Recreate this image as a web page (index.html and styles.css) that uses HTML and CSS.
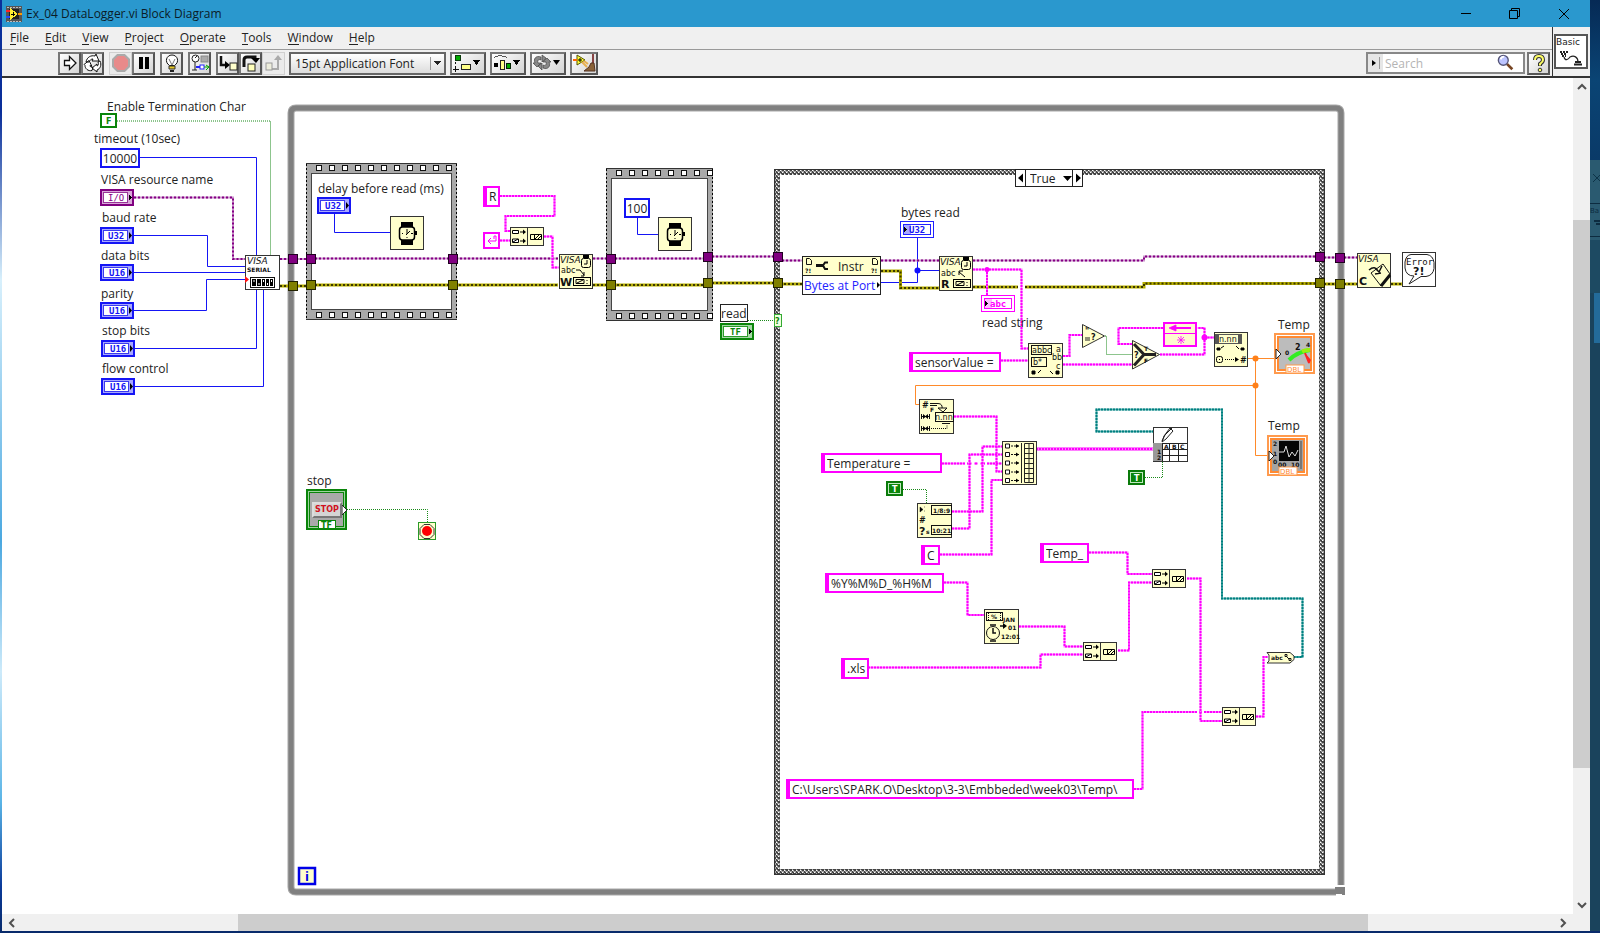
FILE: index.html
```html
<!DOCTYPE html>
<html lang="en">
<head>
<meta charset="utf-8">
<title>Ex_04 DataLogger.vi Block Diagram</title>
<link rel="stylesheet" href="styles.css">
</head>
<body>
<div class="desktop">
<div class="window">
  <header class="titlebar">
    <svg class="app-icon" width="16" height="16" viewBox="0 0 16 16" shape-rendering="crispEdges"><rect width="16" height="16" fill="#555"/><path d="M1 1h14M1 15h14" stroke="#bbb" stroke-dasharray="2 1"/><rect x="3" y="3" width="10" height="10" fill="#222"/><path d="M4 2l8 6-8 6z" fill="#fe3"/><path d="M0 5h4" stroke="#f22" stroke-width="2"/><path d="M0 11h4" stroke="#24f" stroke-width="2"/><path d="M12 8h4" stroke="#f90" stroke-width="2"/><path d="M5 8h4M7 6v4" stroke="#000"/></svg>
    <h1 class="title">Ex_04 DataLogger.vi Block Diagram</h1>
    <div class="caption-buttons">
      <button class="caption" aria-label="Minimize"><svg width="12" height="12" viewBox="0 0 12 12"><path d="M1 5.500h10" stroke="#000"/></svg></button>
      <button class="caption" aria-label="Restore"><svg width="12" height="12" viewBox="0 0 12 12" fill="none" stroke="#000"><path d="M.5 2.500h8v8h-8zM2.500 2.500v-2h8v8h-2"/></svg></button>
      <button class="caption" aria-label="Close"><svg width="12" height="12" viewBox="0 0 12 12"><path d="M1 1l10 10M11 1L1 11" stroke="#000" fill="none"/></svg></button>
    </div>
  </header>

  <div class="header">
    <div class="bars">
      <nav class="menu">
        <a href="#"><u>F</u>ile</a><a href="#"><u>E</u>dit</a><a href="#"><u>V</u>iew</a><a href="#"><u>P</u>roject</a><a href="#"><u>O</u>perate</a><a href="#"><u>T</u>ools</a><a href="#"><u>W</u>indow</a><a href="#"><u>H</u>elp</a>
      </nav>
      <div class="toolbar">
        <div class="run-tools">
        <div class="group">
          <button class="tool" aria-label="Run"><svg width="20" height="20" viewBox="0 0 20 20"><path d="M4.500 7.500h5v-4l6.500 6.500-6.500 6.500v-4h-5z" fill="#fff" stroke="#111" stroke-width="1.300"/></svg></button>
          <button class="tool" aria-label="Run continuously"><svg width="20" height="20" viewBox="0 0 20 20" fill="#fff" stroke="#111"><path d="M3 9c1-5 5-7 9-6l1-2 3 7h-7l1-2c-2 0-3 1-4 3zM17 8c2 4 0 8-3 9v2l-5-4 5-4v2c1 0 2-2 1-4zM9 17.500c-4 1-7-2-7-5l-1-1 5-4 3 6-2-1c0 1 1 2 3 2z"/></svg></button>
        </div>
        <div class="group">
          <button class="tool off" aria-label="Abort execution"><svg width="20" height="20" viewBox="0 0 20 20"><path d="M6.500 2h7l4.500 4.500v7L13.500 18h-7L2 13.500v-7z" fill="#e88a8a" stroke="#aaa" stroke-width="2"/></svg></button>
          <button class="tool" aria-label="Pause"><svg width="20" height="20" viewBox="0 0 20 20"><path d="M5 4h4v12H5zM11 4h4v12h-4z"/></svg></button>
        </div>
        <div class="group">
          <button class="tool" aria-label="Highlight execution"><svg width="20" height="20" viewBox="0 0 20 20"><path d="M7.500 12.500C2 9 4.500 2 10 2s8 7 2.500 10.500z" fill="#fff" stroke="#111"/><path d="M7 6l3 6 3-6" fill="none" stroke="#777"/><path d="M7 13h6v3H7z" fill="#e8c820" stroke="#333"/><path d="M8 17h4v2H8z" fill="#222"/></svg></button>
        </div>
        <div class="group">
          <button class="tool" aria-label="Retain wire values"><svg width="20" height="20" viewBox="0 0 20 20"><circle cx="5.500" cy="5.500" r="3.500" fill="#fff" stroke="#222"/><path d="M5 5l2-2M5 9v8M2 17h5" stroke="#222" fill="none"/><rect x="11" y="3" width="7" height="6" fill="#aaa" stroke="#888"/><path d="M6 14h4" stroke="#22f" stroke-width="2"/><rect x="10" y="12" width="4" height="4" fill="#fff" stroke="#22f"/><path d="M14 14h5M16 12l3 2-3 3" stroke="#0a0" fill="none"/></svg></button>
        </div>
        <div class="group">
          <button class="tool" aria-label="Step into"><svg width="20" height="20" viewBox="0 0 20 20"><path d="M3 3v9h5" fill="none" stroke="#111" stroke-width="2.500"/><path d="M7 8l5 4-5 4z"/><rect x="12" y="10" width="7" height="7" fill="#ffc" stroke="#222"/></svg></button>
          <button class="tool" aria-label="Step over"><svg width="20" height="20" viewBox="0 0 20 20"><path d="M3 14V7q0-3 3-3h8v3" fill="none" stroke="#111" stroke-width="3"/><path d="M10 5h9l-4 5z"/><rect x="7" y="11" width="7" height="7" fill="#ffb" stroke="#222"/></svg></button>
          <button class="tool off" aria-label="Step out"><svg width="20" height="20" viewBox="0 0 20 20"><path d="M8 16h6V6" fill="none" stroke="#aaa" stroke-width="2"/><path d="M10 7l4-5 4 5z" fill="#aaa"/><rect x="2" y="10" width="6" height="7" fill="#eed" stroke="#999"/></svg></button>
        </div>
        </div>
        <select class="font-select" aria-label="Text settings"><option>15pt Application Font</option></select>
        <button class="tool wide" aria-label="Align objects"><svg width="32" height="20" viewBox="0 0 32 20" shape-rendering="crispEdges"><path d="M3.500 9v2M3.500 13v2M1 16.500h6M9 14.500h2M3.500 15v4" stroke="#111"/><rect x="3" y="2" width="6" height="6" fill="#0b3a0b"/><rect x="4" y="3" width="4" height="4" fill="#0a0"/><rect x="9.500" y="11.500" width="9" height="5" fill="#ff8" stroke="#222"/><path d="M21 7h7l-3.500 5z"/></svg></button>
        <button class="tool wide" aria-label="Distribute objects"><svg width="32" height="20" viewBox="0 0 32 20" shape-rendering="crispEdges"><path d="M2 5q1-2 4-2l2-1 2 1q4 0 5 2" stroke="#555" fill="none"/><rect x="2" y="10" width="4" height="4"/><rect x="8.500" y="7.500" width="4" height="9" fill="#ff8" stroke="#222"/><rect x="14.500" y="10.500" width="4" height="5" fill="#0a0" stroke="#020"/><path d="M21 7h7l-3.500 5z"/></svg></button>
        <button class="tool wide" aria-label="Reorder"><svg width="32" height="20" viewBox="0 0 32 20"><path d="M9 4C4 2 1 6 3 10H1l4 4 4-4H6C5 7 7 6 9 7zM11 15c5 2 8-2 6-6h2l-4-4-4 4h3c1 3-1 4-3 3zM10 2l4 3-4 4zM10 10l-4 3 4 4z" fill="#888" stroke="#444" stroke-width=".7"/><path d="M21 7h7l-3.500 5z"/></svg></button>
        <button class="tool clean" aria-label="Clean up diagram"><svg width="24" height="20" viewBox="0 0 24 20"><path d="M5 2l8 5-8 5z" fill="#ff3" stroke="#550"/><path d="M1 7h4" stroke="#f60" stroke-width="2"/><path d="M6 7h4M8 5v4" stroke="#000"/><path d="M10 9l5 5M12 8l4 3" stroke="#e8b050" stroke-width="2"/><path d="M21 1v9" stroke="#844" stroke-width="2"/><path d="M19 10h3l1 8H12l5-4z" fill="#8a6238" stroke="#532"/></svg></button>
        <div class="search">
          <button class="search-scope" aria-label="Search scope"><svg width="14" height="18" viewBox="0 0 14 18"><path d="M3 6l4 3-4 3z"/><path d="M10.500 3v12" stroke="#999"/></svg></button>
          <input type="search" placeholder="Search" aria-label="Search">
          <button class="search-go" aria-label="Find"><svg width="20" height="20" viewBox="0 0 20 20"><path d="M11 11l6 6" stroke="#742" stroke-width="3"/><circle cx="7" cy="7" r="5.500" fill="#bcc4ff" stroke="#557" stroke-width="1.500"/><path d="M4 6q1-3 4-3" stroke="#fff" stroke-width="2" fill="none"/></svg></button>
        </div>
        <button class="tool help" aria-label="Context help"><svg width="20" height="20" viewBox="0 0 20 20"><path d="M6 7q0-4 4-4t4 4q0 2-3 4v2" fill="none" stroke="#333" stroke-width="4"/><path d="M6 7q0-4 4-4t4 4q0 2-3 4v1.500" fill="none" stroke="#ff6" stroke-width="2"/><circle cx="11" cy="17" r="1.800" fill="#ff6" stroke="#333"/></svg></button>
      </div>
    </div>
    <div class="vi-icon-cell">
      <div class="vi-icon"><span>Basic</span><svg width="30" height="18" viewBox="0 0 30 18"><path d="M4 3h8M5 5h6M6 7h4" stroke="#222" stroke-width="2" stroke-dasharray="2 1"/><path d="M8 8c1 4 4 3 6 0 4-2 8 0 8 5" fill="none" stroke="#222" stroke-width="1.200"/><path d="M19 13h6M18 15.500h8" stroke="#222" stroke-width="2"/></svg></div>
    </div>
  </div>

  <main class="work">
    <div class="canvas">
<svg class="diagram" width="1570" height="836" viewBox="2 78 1570 836">
<defs>
  <pattern id="mesh" width="4" height="4" patternUnits="userSpaceOnUse"><rect width="4" height="4" fill="#a4a4a4"/><path d="M0 0h2v1H0zM1 1h2v1H1zM2 2h2v1H2zM0 3h1v1H0zM3 1h1v1H3z" fill="#444"/><path d="M0 2h1v1H0zM2 0h1v1H2z" fill="#fff"/></pattern>
  <pattern id="film" width="13" height="10" patternUnits="userSpaceOnUse"><rect width="13" height="10" fill="#a9a9a9"/><rect x="3.500" y="2.500" width="5" height="5" fill="#fff" stroke="#111"/></pattern>
  <symbol id="num" viewBox="0 0 34 17"><rect width="34" height="17" fill="#1515f5"/><rect x="2" y="2" width="30" height="13" fill="#a8a8ff"/><rect x="3.500" y="3.500" width="24" height="10" fill="#fff" stroke="#3a3af0"/><path d="M29 5l3 3.500-3 3.500z"/></symbol>
  <symbol id="watch" viewBox="0 0 34 34"><rect x=".5" y=".5" width="33" height="33" fill="#ffc" stroke="#333"/><path d="M11 6h12v5H11zM11 24h12v5H11zM25 15h2v4h-2z"/><rect x="9.500" y="11" width="15" height="13" rx="3" fill="#ffc" stroke="#000" stroke-width="1.500"/><path d="M17 13v5M16 19l4-4M12 17.500h1M21 17.500h2M17 21v1" stroke="#000" fill="none"/></symbol>
  <symbol id="concat" viewBox="0 0 34 19"><rect x=".5" y=".5" width="33" height="18" fill="#ffc" stroke="#333"/><path d="M17.500 1v17" stroke="#333"/><path d="M2.500 3.500h6v3h-6z" fill="#fff" stroke="#000"/><path d="M2.500 12h6v3.500h-6z" fill="#fff" stroke="#000"/><path d="M3 15l5-3M10 5h4M10 14h4" stroke="#000"/><path d="M13 2.500l3 2.500-3 2.500zM13 11.500l3 2.500-3 2.500z"/><path d="M20.500 7.500h11v5h-11zM24.500 7.500v5M25 12l4-4M28 12l3-3" stroke="#000" fill="none"/></symbol>
  <symbol id="tp" viewBox="0 0 10 10"><rect x=".5" y=".5" width="9" height="9" fill="#800080" stroke="#200020"/></symbol>
  <symbol id="ty" viewBox="0 0 10 10"><rect x=".5" y=".5" width="9" height="9" fill="#808000" stroke="#222200"/></symbol>

  <g id="pink-wires">
    <path d="M500 196h54.500v20H505.500v15H510M500 240.500h10M544 236.500h8.500V267.500h6"/>
    <path d="M973 269.500h13M1063 356h6.500v-21H1082M1001 360.500h27M1063 364.500h69M1163 328h-44.500v16h13.500M1160 354.500h44.500V328h-7M1204.500 337.500h10"/>
    <path d="M954 416.500h42.500v55h7M952 511.500h30.500v-65h20.500M952 528.500h17.500v-74h34M942 463.500h61M940 554.500h51.500v-74.500h12"/>
    <path d="M944 582.500h23.500v32.500h17M1089 552.500h38.500v21.500h25M1118 650.500h11v-68h23M1019 626.500h45.500v20h19M868 667.500h172.500v-13h43"/>
    <path d="M1134 789h8.500v-77H1222M1256 716.500h7.500V657h4"/>
  </g>
  <g id="pink-over"><path d="M986 269.500h35.500V348.500h7M987 269v26M1187 578.500h13.500V721h22"/></g>
  <g id="purple-wires"><path d="M134 197.500h99v61.500h13M280 259h12M292 259h19M311 258.500h141M452 258.500h106M593 258.500h18M611 258.500h97M708 256.500h70M778 260.500h24M881 260.500h58M973 260.500h171v-4h176M1320 257.500h37"/></g>
  <g id="yellow-wires"><path d="M280 286h31M311 285h247M593 285h115M708 283h70M780 284h22M881 271h19.500v17h38.500M973 287h45M1025 287h119v-3.500h176M1320 284h37M1391 284h11"/></g>
  <g id="teal-wires"><path d="M1154 431.500h-57.500v-22h125.500v189h80.500V657H1293"/></g>
</defs>

<!-- while loop -->
<path class="loop-edge" d="M1341 885V113q0-5-5-5H296q-5 0-5 5V887q0 5 5 5H1336"/>
<path class="loop" d="M1341 885V113q0-5-5-5H296q-5 0-5 5V887q0 5 5 5H1336"/>
<path d="M1335 887h10v8h-3v-1h-7z" fill="#808080"/>

<!-- case structure -->
<path d="M774 169h551v705H774zM780 175v694h539V175z" fill="url(#mesh)" fill-rule="evenodd"/>
<rect x="774.500" y="169.500" width="550" height="705" class="ink"/>

<!-- sequence frames -->
<g class="crisp">
  <rect x="306" y="163" width="151" height="157" fill="#a9a9a9"/>
  <rect width="143" height="10" fill="url(#film)" transform="translate(313 163)"/>
  <rect width="143" height="10" fill="url(#film)" transform="translate(313 310)"/>
  <rect x="311.500" y="173.500" width="140" height="136" fill="#fff" stroke="#444"/>
  <path d="M306 163.500h151M306 319.500h151" stroke="#333"/><path d="M306.500 164v156M456.500 164v156" stroke="#000" stroke-dasharray="2 2"/>
  <rect x="606" y="168" width="107" height="153" fill="#a9a9a9"/>
  <rect width="100" height="10" fill="url(#film)" transform="translate(613 168)"/>
  <rect width="100" height="10" fill="url(#film)" transform="translate(613 311)"/>
  <rect x="611.500" y="178.500" width="96" height="132" fill="#fff" stroke="#444"/>
  <path d="M606 168.500h107M606 320.500h107" stroke="#333"/><path d="M606.500 169v152M712.500 169v152" stroke="#000" stroke-dasharray="2 2"/>
</g>

<!-- wires -->
<g class="w-bool"><path d="M117 121h153.500v134M748 320.500h26M1105 336h1.500v18.500h26M903 489.500h23.500v14M1145 477.500h17.500v-16M341 509.500h86.500V522"/></g>
<g class="w-int"><path d="M140 157.500h116.500V255M134 235.500h73.500v31H246M134 272.500h112M134 310.500h72.500v-31H246M135 348.500h121.500V290M135 386.500h128.500V290M334.500 214v18.500H390M637.500 218v16.500h21M917.500 238v44.500H881M917.500 270.500H939"/></g>
<g class="w-dbl"><path d="M1248 358.500h27M1255.500 358v97.500h12M1255.500 385.500H915.500v19h4"/></g>
<use href="#purple-wires" class="w-purple"/><use href="#purple-wires" class="w-purple-t"/>
<use href="#yellow-wires" class="w-err"/><use href="#yellow-wires" class="w-err-t"/>
<use href="#teal-wires" class="w-teal"/><use href="#teal-wires" class="w-teal-t"/>
<use href="#pink-wires" class="w-str"/><use href="#pink-wires" class="w-str-t"/>
<path d="M965 463.500h2M972 463.500h2M978 463.500h2M985 463.500h2M1197 712h2M1202 712h2" stroke="#fff" stroke-width="4"/>
<use href="#pink-over" class="w-str"/><use href="#pink-over" class="w-str-t"/>
<path d="M1037 449h117" stroke="#f0f" stroke-width="3"/><path d="M1038 449h116" stroke="#fff" stroke-dasharray="1 2"/>
<circle cx="917.500" cy="270.500" r="3" fill="#11f"/><circle cx="1255.500" cy="358.500" r="3" fill="#ff8019"/><circle cx="1255.500" cy="385.500" r="3" fill="#ff8019"/>
<circle cx="987" cy="269.500" r="2.500" fill="#f0f"/><circle cx="1204.500" cy="337.500" r="3" fill="#f0f"/>

<!-- tunnels -->
<use href="#tp" x="288" y="254" width="10" height="10"/><use href="#tp" x="306" y="254" width="10" height="10"/><use href="#tp" x="448" y="254" width="10" height="10"/><use href="#tp" x="606" y="254" width="10" height="10"/><use href="#tp" x="703" y="252" width="10" height="10"/><use href="#tp" x="773" y="252" width="10" height="10"/><use href="#tp" x="1315" y="252" width="10" height="10"/><use href="#tp" x="1335" y="253" width="10" height="10"/>
<use href="#ty" x="288" y="281" width="10" height="10"/><use href="#ty" x="306" y="280" width="10" height="10"/><use href="#ty" x="448" y="280" width="10" height="10"/><use href="#ty" x="606" y="280" width="10" height="10"/><use href="#ty" x="703" y="278" width="10" height="10"/><use href="#ty" x="773" y="278" width="10" height="10"/><use href="#ty" x="1315" y="278" width="10" height="10"/><use href="#ty" x="1335" y="279" width="10" height="10"/>
<rect x="774.500" y="314.500" width="7" height="12" fill="#efd" stroke="#3a3"/><text class="px green" x="775" y="324">?</text>

<!-- serial settings -->
<g class="label">
  <text x="107" y="111">Enable Termination Char</text><text x="94" y="143">timeout (10sec)</text><text x="101" y="184">VISA resource name</text><text x="102" y="222">baud rate</text><text x="101" y="260">data bits</text><text x="101" y="298">parity</text><text x="102" y="335">stop bits</text><text x="102" y="373">flow control</text>
  <text x="318" y="193">delay before read (ms)</text><text x="901" y="217">bytes read</text><text x="982" y="327">read string</text><text x="1278" y="329">Temp</text><text x="1268" y="430">Temp</text><text x="307" y="485">stop</text>
</g>
<rect x="101" y="114" width="15" height="13" fill="#fff" stroke="#0a850a" stroke-width="2"/><text class="px green" x="106" y="124">F</text>
<g class="crisp"><rect x="100" y="189" width="34" height="17" fill="#800080"/><rect x="102" y="191" width="30" height="13" fill="#d9a8d9"/><rect x="103.500" y="192.500" width="24" height="10" fill="#fff" stroke="#939"/><path d="M129 194l3 3.500-3 3.500z"/></g><text class="term light purple" x="108" y="201">I/O</text>
<use href="#num" x="100" y="227" width="34" height="17"/><use href="#num" x="100" y="264" width="34" height="17"/><use href="#num" x="100" y="302" width="34" height="17"/><use href="#num" x="101" y="340" width="34" height="17"/><use href="#num" x="101" y="378" width="34" height="17"/><use href="#num" x="317" y="197" width="34" height="17"/>
<g class="term blue"><text x="108" y="239">U32</text><text x="109" y="276">U16</text><text x="109" y="314">U16</text><text x="110" y="352">U16</text><text x="110" y="390">U16</text><text x="325" y="209">U32</text></g>
<g transform="translate(245 255)"><rect x=".5" y=".5" width="34" height="34" fill="#fff" stroke="#333"/><text class="px thin it" x="2" y="9">VISA</text><text class="tiny" x="2" y="17">SERIAL</text><rect x="5.500" y="22.500" width="24" height="10" fill="#fff" stroke="#111"/><path d="M7 24h4v7H7zM12 24h4v7h-4zM17 24h3v7h-3zM21 24h3v7h-3zM25 24h3v7h-3z"/><path d="M9 25v2M14 28v2M18.500 25v2M22.500 28v2M26.500 25v2" stroke="#fff"/><path d="M0 21l4 3.500L0 28z" fill="#f11"/></g>

<use href="#watch" x="390" y="216" width="34" height="34"/><use href="#watch" x="658" y="217" width="34" height="34"/>
<rect x="484" y="233" width="15" height="15" fill="#fff" stroke="#f0f" stroke-width="2"/><path d="M496 236v5h-7M491 238l-3 3 3 3M496 236h-2v3" fill="none" stroke="#f0f"/>
<use href="#concat" x="510" y="227" width="34" height="19"/><use href="#concat" x="1152" y="569" width="34" height="19"/><use href="#concat" x="1083" y="642" width="34" height="19"/><use href="#concat" x="1222" y="707" width="34" height="19"/>

<!-- VISA write and read -->
<g transform="translate(559 254)"><rect x=".5" y=".5" width="33" height="34" fill="#ffc" stroke="#333"/><text class="px thin it" x="1" y="9">VISA</text><text class="px thin" x="2" y="19">abc</text><text class="px big" x="1" y="32">W</text><path d="M24 1h6v3h-6z"/><rect x="22.500" y="4.500" width="9" height="9" rx="2" fill="#ffc" stroke="#000"/><path d="M28 6v4h-3M17 16h4l4 5M25 18v4h-3" fill="none" stroke="#000"/><rect x="14.500" y="23.500" width="17" height="8" fill="#ffc" stroke="#000"/><path d="M17 25.500h8v4h-8zM18 29l6-3M28 26v1M28 29v1" fill="none" stroke="#000"/></g>
<g transform="translate(939 256)"><rect x=".5" y=".5" width="33" height="34" fill="#ffc" stroke="#333"/><text class="px thin it" x="1" y="9">VISA</text><text class="px thin" x="2" y="20">abc</text><text class="px big" x="2" y="32">R</text><path d="M24 1h6v3h-6z"/><rect x="22.500" y="4.500" width="9" height="9" rx="2" fill="#ffc" stroke="#000"/><path d="M28 6v4h-3M26 21l-6-5M20 19v-4h4" fill="none" stroke="#000"/><rect x="14.500" y="23.500" width="17" height="8" fill="#ffc" stroke="#000"/><path d="M17 25.500h8v4h-8zM18 29l6-3M28 26v1M28 29v1" fill="none" stroke="#000"/></g>

<!-- read control -->
<rect x="720.500" y="304.500" width="27" height="17" fill="#fff" stroke="#222"/><text class="lab" x="721" y="318">read</text>
<g class="crisp"><rect x="720" y="323" width="34" height="17" fill="#0a850a"/><rect x="722" y="325" width="30" height="13" fill="#a5d8a5"/><rect x="723.500" y="326.500" width="24" height="10" fill="#fff" stroke="#2a9a2a"/><path d="M749 328l3 3.500-3 3.500z"/></g><text class="term green" x="730" y="335">TF</text>

<!-- property node -->
<rect x="802.500" y="256.500" width="78" height="38" fill="#fff" stroke="#222"/><rect x="802.500" y="256.500" width="78" height="19" fill="#ffc" stroke="#222"/>
<path d="M806.500 258.500h3l2 2v4h-5zM872.500 258.500h3l2 2v4h-5z" fill="#ffc" stroke="#111"/><text class="tiny" x="805" y="273">?!</text><text class="tiny" x="871" y="273">?!</text>
<path d="M816 265.500h8" stroke="#111" stroke-width="3"/><path d="M828 262.500h-3l-2 3 2 3.500h3" fill="none" stroke="#111" stroke-width="2"/>
<text class="lab" x="838" y="271">Instr</text><text class="lab bluet" x="804" y="290">Bytes at Port</text><path d="M877 282l3 3-3 3z"/>
<g class="crisp"><rect x="900.500" y="221.500" width="33" height="16" fill="#fff" stroke="#22f"/><rect x="903.500" y="224.500" width="27" height="10" fill="#fff" stroke="#22f"/><rect x="904" y="225" width="7" height="9" fill="#a8a8ff"/><path d="M904 226l3 3.500-3 3.500z"/></g><text class="term blue" x="909" y="233">U32</text>
<g class="crisp"><rect x="981.500" y="295.500" width="33" height="16" fill="#fff" stroke="#f0f"/><rect x="984.500" y="298.500" width="27" height="10" fill="#fff" stroke="#f0f"/><rect x="985" y="299" width="7" height="9" fill="#fbf"/><path d="M985 300l3 3.500-3 3.500z"/></g><text class="term pink" x="990" y="307">abc</text>

<!-- VISA close, error handler -->
<g transform="translate(1357 253)"><rect x=".5" y=".5" width="33" height="34" fill="#ffc" stroke="#333"/><text class="px thin it" x="1" y="9">VISA</text><text class="px big" x="2" y="32">C</text><path d="M14 20l12-9 7 10-9 12zM24 33l9-10" fill="#ffc" stroke="#111"/><path d="M24 33l9-11" stroke="#111" stroke-width="3"/><path d="M12 17q6-5 9 1M18 15l4 4 3-6M18 21l6-1" fill="none" stroke="#111" stroke-width="1.500"/></g>
<g transform="translate(1402 252)"><rect x=".5" y=".5" width="33" height="34" fill="#fff" stroke="#333"/><path d="M9 2.500h16q6 1 7 8v6q-1 7-8 8h-5L7 32l5-8q-8 0-9-8v-6q1-7 6-7.500z" fill="#fff" stroke="#222"/><text class="px mono" x="4" y="13">Error</text><text class="px big" x="11" y="23">?!</text></g>

<!-- match pattern, empty test, select, feedback, fract string to number -->
<g transform="translate(1028 343)"><rect x=".5" y=".5" width="34" height="34" fill="#ffc" stroke="#333"/><rect x="3.500" y="2.500" width="20" height="9" fill="#ffc" stroke="#111"/><text class="px thin" x="4" y="10">abbc</text><rect x="3.500" y="14.500" width="15" height="9" fill="#ffc" stroke="#111"/><text class="px thin" x="5" y="22">b*</text><text class="px thin" x="28" y="9">a</text><text class="px thin" x="24" y="17">bb</text><text class="px thin" x="28" y="26">c</text><path d="M4 28h3v3H4zM10 30l3-3M22 28l3 3M28 28h3v3h-3z" stroke="#000"/></g>
<path d="M1082.500 324.500l22 11.500-22 11.500z" fill="#ffc" stroke="#333"/><text class="px" x="1085" y="334">"</text><text class="px" x="1091" y="340">?</text><path d="M1085 338h5M1085 340h5" stroke="#222"/>
<path d="M1132.500 340.500l27 14-27 14.500z" fill="#ffc" stroke="#333"/><path d="M1134 344l10 10.500-10 11M1144 354.500h12" fill="none" stroke="#222" stroke-width="3"/><text class="px" x="1134" y="358">?</text><text class="tiny" x="1144" y="351">T</text><text class="tiny" x="1144" y="363">F</text>
<rect x="1164" y="323" width="32" height="23" fill="#fffad0" stroke="#f0f" stroke-width="2"/><path d="M1164 333.500h32" stroke="#f0f"/><path d="M1175 328h16" stroke="#f0f" stroke-width="2"/><path d="M1169 328l7-3v6zM1181 336v8M1177 340h8M1178 337l6 6M1184 337l-6 6" fill="#f0f" stroke="#f0f" stroke-width=".8"/>
<g transform="translate(1214 332)"><rect x=".5" y=".5" width="33" height="34" fill="#ffc" stroke="#333"/><rect x="1" y="2" width="27" height="10" fill="#555"/><rect x="5" y="3" width="19" height="8" fill="#ffc"/><text class="px thin" x="5" y="10">n.nn</text><path d="M3 16h3v2H3zM7 16l3-2M22 14l3 3M27 16h3v2h-3z" stroke="#000"/><rect x="2.500" y="24.500" width="6" height="6" rx="2" fill="none" stroke="#000"/><path d="M5 27.500h1M11 27.500h10" stroke="#000" stroke-dasharray="1 1"/><path d="M21 25l4 2.500-4 2.500z"/><text class="px" x="26" y="31">#</text></g>

<!-- gauge and chart terminals -->
<g transform="translate(1274 333)"><rect x="1" y="1" width="39" height="39" fill="#fff" stroke="#ff9a4d" stroke-width="2"/><rect x="4" y="4" width="33" height="33" fill="#bcbcbc" stroke="#ff8a33" stroke-width="2"/><path d="M15 27q8-8 21-10" stroke="#3e2" stroke-width="4" fill="none"/><path d="M28 18.500q4-2 8-1.500" stroke="#9e1" stroke-width="4" fill="none"/><path d="M31 20l4 11 2-4z" fill="#f22"/><path d="M31 20l4 10" stroke="#f22" stroke-width="2"/><text class="tiny" x="11" y="22">0</text><text class="px" x="21" y="17">2</text><text class="tiny" x="32" y="14">4</text><path d="M2 16l5 5-5 5z" fill="#fff" stroke="#222"/><rect x="12" y="32" width="18" height="8" fill="#fff" stroke="#ff9a4d"/><text class="px thin orange" x="13" y="39">DBL</text></g>
<g transform="translate(1267 435)"><rect x="1" y="1" width="39" height="39" fill="#fff" stroke="#ff9a4d" stroke-width="2"/><rect x="4" y="4" width="33" height="33" fill="#a4a4a4" stroke="#ff8a33" stroke-width="2"/><path d="M34 6v28" stroke="#777" stroke-width="2"/><rect x="12" y="6" width="20" height="20" fill="#050505"/><path d="M12 17h5l2-6 3 11 3-5 3 4 3-6" stroke="#ddd" fill="none"/><text class="tiny" x="6" y="11">2</text><text class="tiny" x="6" y="21">1</text><text class="tiny" x="6" y="29">0</text><text class="tiny" x="11" y="32">00</text><text class="tiny" x="24" y="32">10</text><path d="M2 16l5 5-5 5z" fill="#fff" stroke="#222"/><rect x="12" y="32" width="18" height="8" fill="#fff" stroke="#ff9a4d"/><text class="px thin orange" x="13" y="39">DBL</text></g>

<!-- number to string -->
<g transform="translate(919 399)"><rect x=".5" y=".5" width="34" height="34" fill="#ffc" stroke="#333"/><text class="px" x="3" y="9">#</text><path d="M11 4.500h8q5 0 4 6M11 6.500h7" fill="none" stroke="#111"/><path d="M19 9h9l-4 4z" fill="#ffc" stroke="#111"/><text class="tiny" x="11" y="13">F</text><rect x="16.500" y="13.500" width="18" height="9" fill="#ffc" stroke="#111"/><text class="px thin" x="16" y="21">n.nn</text><path d="M2.500 15v5M10.500 15v5M3 17.500h7M2.500 27v5M10.500 27v5M3 29.500h7M23 24.500h8" stroke="#111"/><path d="M12 29.500h16v-4" fill="none" stroke="#111" stroke-dasharray="1 1"/><path d="M4 15v5l3-2.500zM9 15v5l-3-2.500zM4 27v5l3-2.500zM9 27v5l-3-2.500z"/></g>

<!-- build array -->
<g transform="translate(1002 441)"><rect x=".5" y=".5" width="34" height="43" fill="#ffc" stroke="#333"/><path d="M3.500 3h4v4h-4zM3.500 11.500h4v4h-4zM3.500 20h4v4h-4zM3.500 29h4v4h-4zM3.500 37.500h4v4h-4z" fill="#fff" stroke="#111"/><path d="M9 5h8M9 13.500h8M9 22h8M9 31h8M9 39.500h8" stroke="#111" stroke-dasharray="2 1"/><path d="M14 3l3 2-3 2zM14 11.500l3 2-3 2zM14 20l3 2-3 2zM14 29l3 2-3 2zM14 37.500l3 2-3 2z"/><path d="M19.500 2v40M22.500 2.500h9v39h-9zM27 3v38M22 7.500h10M22 12.500h10M22 17.500h10M22 22.500h10M22 27.500h10M22 32.500h10M22 37.500h10" fill="none" stroke="#222"/></g>

<!-- write to spreadsheet -->
<g transform="translate(1153 427)"><rect x=".5" y=".5" width="34" height="34" fill="#fff" stroke="#333"/><path d="M0 16h9v18H0z" fill="#999"/><path d="M9.500 16v18M16.500 16v18M25.500 16v18M9 16.500h25M9 22.500h25M9 28.500h25" stroke="#222"/><path d="M9 14l3-6 7-7M13 12l7-8-3-3-6 8-2 6z" fill="#fff" stroke="#222"/><text class="tiny" x="11" y="22">A</text><text class="tiny" x="19" y="22">B</text><text class="tiny" x="27" y="22">C</text><text class="tiny" x="4" y="27">1</text><text class="tiny" x="4" y="33">2</text></g>

<g class="crisp"><rect x="886" y="481" width="17" height="15" fill="#0a7a0a"/><rect x="888.500" y="483.500" width="12" height="10" fill="#0a850a" stroke="#bfe8bf"/><rect x="1128" y="470" width="17" height="15" fill="#0a7a0a"/><rect x="1130.500" y="472.500" width="12" height="10" fill="#0a850a" stroke="#bfe8bf"/></g><text class="px white" x="892" y="492">T</text><text class="px white" x="1134" y="481">T</text>

<!-- date/time string -->
<g transform="translate(917 503)"><rect x=".5" y=".5" width="34" height="34" fill="#ffc" stroke="#333"/><rect x="14.500" y="2.500" width="20" height="9" fill="#ffc" stroke="#111"/><text class="tiny" x="16" y="10">1/8:9</text><rect x="14.500" y="22.500" width="20" height="9" fill="#ffc" stroke="#111"/><text class="tiny" x="15" y="30">10:21</text><path d="M3 4l3 2.500L3 9zM7 4h1M7 8h1" stroke="#111" stroke-width=".5"/><text class="px" x="2" y="20">#</text><text class="px big" x="2" y="32">?</text><text class="tiny" x="9" y="31">s</text></g>

<!-- format date/time -->
<g transform="translate(984 609)"><rect x=".5" y=".5" width="34" height="34" fill="#ffc" stroke="#333"/><rect x="2.500" y="3.500" width="16" height="8" fill="#ffc" stroke="#111"/><path d="M4.500 4v8M16.500 4v8" stroke="#111" stroke-dasharray="1 1"/><text class="tiny" x="7" y="10">%</text><text class="tiny" x="19" y="13">JAN</text><text class="tiny" x="24" y="21">01</text><text class="tiny" x="17" y="30">12:01</text><circle cx="9" cy="24" r="6.500" fill="#ffc" stroke="#111"/><path d="M9 19v5h3M6 16h6M6 32h6M16 17h5" fill="none" stroke="#111" stroke-width="1.500"/><path d="M19 14l4 3-4 3z"/></g>

<!-- string to path -->
<path d="M1267 652.500h23l4 3.500v3.500l-4 3.500h-23l2-2v-6z" fill="#ffc" stroke="#333"/><text class="tiny" x="1271" y="660">abc</text><path d="M1285 654.500h2v2h-2zM1289 658.500h2v2h-2zM1287 657l2 2" fill="none" stroke="#111"/>

<!-- stop control -->
<g class="crisp"><rect x="306" y="489" width="41" height="41" fill="#0a850a"/><rect x="308" y="491" width="37" height="37" fill="#9fd39f"/><rect x="309.500" y="492.500" width="34" height="34" fill="#a9a9a9" stroke="#0a850a"/><rect x="318" y="520" width="17" height="8" fill="#fff" stroke="#0a850a"/></g><text class="px green" x="321" y="528">TF</text>
<path d="M342 505l5 5-5 5z" fill="#fff" stroke="#222"/>
<rect x="418.500" y="522.500" width="17" height="17" fill="#ffc" stroke="#2a9a2a"/><path d="M424 524.500h6l4 4v6l-4 4h-6l-4-4v-6z" fill="#ffc" stroke="#333"/><circle cx="427" cy="531" r="5" fill="#f00"/>
<rect x="299" y="868" width="16" height="16" fill="#ffc" stroke="#0000e8" stroke-width="2.500"/><text class="iter" x="305" y="881">i</text>

<!-- editable constants -->
<foreignObject x="100" y="148" width="40" height="20"><input class="const num" value="10000" aria-label="timeout"></foreignObject>
<foreignObject x="624" y="198" width="26" height="20"><input class="const num" value="100" aria-label="wait (ms)"></foreignObject>
<foreignObject x="483" y="186" width="17" height="21"><input class="const str" value="R" aria-label="command"></foreignObject>
<foreignObject x="909" y="352" width="92" height="20"><input class="const str" value="sensorValue =" aria-label="pattern"></foreignObject>
<foreignObject x="821" y="453" width="121" height="20"><input class="const str" value="Temperature =" aria-label="prefix"></foreignObject>
<foreignObject x="921" y="545" width="19" height="20"><input class="const str" value="C" aria-label="unit"></foreignObject>
<foreignObject x="825" y="573" width="119" height="20"><input class="const str" value="%Y%M%D_%H%M" aria-label="time format"></foreignObject>
<foreignObject x="1040" y="543" width="49" height="20"><input class="const str" value="Temp_" aria-label="file name prefix"></foreignObject>
<foreignObject x="841" y="658" width="28" height="21"><input class="const str" value=".xls" aria-label="file extension"></foreignObject>
<foreignObject x="786" y="779" width="348" height="20"><input class="const str" value="C:\Users\SPARK.O\Desktop\3-3\Embbeded\week03\Temp\" aria-label="folder"></foreignObject>
<foreignObject x="312" y="502" width="30" height="16"><button class="stop">STOP</button></foreignObject>
<foreignObject x="1015" y="169" width="68" height="18"><div class="case"><button aria-label="Previous case"></button><select aria-label="Case"><option>True</option></select><button aria-label="Next case"></button></div></foreignObject>
<path class="nohit" d="M1023 173.500v9l-5-4.500zM1076 173.500v9l5-4.500zM1063 176h9l-4.500 5z"/>
</svg>
    </div>
    <div class="vscroll"><button aria-label="Scroll up"><svg width="10" height="8" viewBox="0 0 10 8"><path d="M1 6l4-4 4 4" fill="none" stroke="#505050" stroke-width="2"/></svg></button><div class="track"><i></i></div><button aria-label="Scroll down"><svg width="10" height="8" viewBox="0 0 10 8"><path d="M1 2l4 4 4-4" fill="none" stroke="#505050" stroke-width="2"/></svg></button></div>
    <div class="hscroll"><button aria-label="Scroll left"><svg width="8" height="10" viewBox="0 0 8 10"><path d="M6 1L2 5l4 4" fill="none" stroke="#505050" stroke-width="2"/></svg></button><div class="track"><i></i></div><button aria-label="Scroll right"><svg width="8" height="10" viewBox="0 0 8 10"><path d="M2 1l4 4-4 4" fill="none" stroke="#505050" stroke-width="2"/></svg></button></div>
  </main>
</div>
<aside class="behind" aria-hidden="true">
  <svg width="10" height="240" viewBox="0 0 10 240"><rect y="160" width="10" height="80" fill="#2a5a70"/><path d="M3 174l7 7M3 182l7-7" stroke="#0d3348"/><path d="M0 203.500h10M0 236.500h10" stroke="#0d2c40"/><path d="M4 221h6M6 224h4" stroke="#0d2c40" stroke-width="2"/><text class="behind-text" x="0" y="213">Ba</text></svg>
  <div class="behind-mid"></div>
  <div class="behind-tab"></div>
</aside>
</div>
</body>
</html>
```
FILE: styles.css
```css
* { box-sizing: border-box; }
body { margin: 0; font-family: "Open Sans", "Noto Sans", sans-serif; font-size: 12px; color: #222; }
button, select, input { font: inherit; color: inherit; }
button { display: flex; align-items: center; justify-content: center; padding: 0; }

.desktop { display: flex; height: 100vh; padding: 0 0 2px 2px; background: linear-gradient(#0a2f9a 0, #0a2f9a 12%, #d8f0fc 30%, #4ba8e0 58%, #cdeafa 72%, #5ab4e6 86%, #0a3a9a 95%, #082a6a); }
.window { flex: 1; min-width: 0; display: flex; flex-direction: column; background: #fff; }

.titlebar { display: flex; align-items: center; height: 27px; padding: 0 2px 0 4px; gap: 4px; background: #2a98ce; }
.title { flex: 1; margin: 0; font-size: 12px; font-weight: 400; color: #0a1c28; }
.caption-buttons { display: flex; }
.caption { width: 49px; height: 25px; border: 0; background: none; }

.header { display: flex; background: #f0f0f0; border-bottom: 2px solid #333; }
.bars { flex: 1; min-width: 0; }
.menu { display: flex; align-items: center; gap: 16px; height: 23px; padding: 0 0 2px 8px; border-bottom: 1px solid #999; }
.menu a { color: #222; text-decoration: none; }
.menu u { text-decoration: none; box-shadow: inset 0 -1px #222; line-height: 14px; display: inline-block; }
.toolbar { display: flex; align-items: center; gap: 4px; height: 26px; padding: 0 2px 0 56px; }
.run-tools { display: flex; gap: 5px; }
.group { display: flex; }
.tool { width: 23px; height: 23px; border: 2px solid; border-color: #777 #555 #555 #777; background: linear-gradient(135deg, #fff, #d4d4d4); }
.tool.off { border: 1px solid #d0d0d0; background: #ebebeb; }
.tool.wide { width: 36px; }
.tool.clean { width: 28px; }
.tool svg { flex: none; }
.font-select { width: 157px; height: 23px; padding: 0 4px; border: 2px solid #666; border-radius: 0; appearance: none; background:
  linear-gradient(#999, #999) 139px 3px / 1px 13px no-repeat,
  linear-gradient(45deg, transparent 50%, #222 50%) 143px 7px / 4px 4px no-repeat,
  linear-gradient(-45deg, transparent 50%, #222 50%) 147px 7px / 4px 4px no-repeat,
  linear-gradient(#fff, #dcdcdc); }
.search { display: flex; align-items: center; width: 159px; height: 22px; margin-left: auto; border: 2px solid #888; background: #fff; }
.search-scope { width: 15px; height: 18px; border: 0; background: #e6e6e6; }
.search input { flex: 1; min-width: 0; padding: 0 2px; border: 0; outline: 0; background: none; }
.search input::placeholder { color: #b4b4b4; }
.search-go { width: 26px; height: 18px; padding-right: 8px; border: 0; background: none; }
.help { margin-left: -2px; }
.vi-icon-cell { display: flex; align-items: center; width: 38px; padding-left: 1px; border-left: 1px solid #333; }
.vi-icon { width: 34px; height: 35px; border: 2px solid #555; background: #fff; font: 9px/13px "DejaVu Sans", sans-serif; }
.vi-icon svg, .vi-icon span { display: block; }

.work { flex: 1; min-height: 0; display: grid; grid-template-columns: minmax(0, 1fr) 17px; grid-template-rows: minmax(0, 1fr) 17px; background: #f0f0f0; }
.canvas { overflow: hidden; background: #fff; }
.diagram { display: block; }
.vscroll { display: flex; flex-direction: column; padding: 3px 0; }
.vscroll button { height: 12px; border: 0; background: none; }
.hscroll { display: flex; padding: 0 3px; }
.hscroll button { width: 14px; border: 0; background: none; }
.vscroll .track, .hscroll .track { flex: 1; display: flex; background: #f0f0f0; }
.vscroll .track { flex-direction: column; }
.track i { background: #cdcdcd; }
.vscroll i { flex: 0 0 68%; margin-top: 127px; }
.hscroll i { flex: 0 0 73.5%; margin-left: 219px; }

.behind { display: flex; flex-direction: column; width: 10px; background: linear-gradient(#062a55, #0a4474 80px, #0a3a68 160px, #1a435c 240px); }
.behind-mid { height: 53px; background: #1d4a62; }
.behind-tab { height: 50px; margin-left: 4px; background: #236b9a; }
.behind-text { font: 7px "DejaVu Sans", sans-serif; fill: #0d2c40; }

.loop { fill: none; stroke: #808080; stroke-width: 5; }
.loop-edge { fill: none; stroke: #a8a8a8; stroke-width: 7; }
.ink { fill: none; stroke: #333; }
.crisp { shape-rendering: crispEdges; }
.nohit { pointer-events: none; }

.w-bool, .w-int, .w-dbl, .w-str, .w-str-t, .w-purple, .w-purple-t, .w-err, .w-err-t, .w-teal, .w-teal-t { fill: none; }
.w-bool { stroke: #1a8a1a; stroke-width: 1; stroke-dasharray: 1 1; }
.w-int { stroke: #1515f5; stroke-width: 1; }
.w-dbl { stroke: #ff8a2a; stroke-width: 1; }
.w-str { stroke: #ff80ff; stroke-width: 2; }
.w-str-t { stroke: #f0f; stroke-width: 2; stroke-dasharray: 2 1; }
.w-purple { stroke: #cc96cc; stroke-width: 2; }
.w-purple-t { stroke: #850085; stroke-width: 2; stroke-dasharray: 2 2; }
.w-err { stroke: #b5ad00; stroke-width: 3; }
.w-err-t { stroke: #3a3800; stroke-width: 2; stroke-dasharray: 2 2; }
.w-teal { stroke: #5fb3b3; stroke-width: 2; }
.w-teal-t { stroke: #008080; stroke-width: 2; stroke-dasharray: 2 1; }

.label, .lab { font-size: 12px; fill: #222; }
.bluet { fill: #22f; }
.term { font: bold 9px "DejaVu Sans Mono", monospace; }
.term.light { font-weight: 400; }
.px { font: bold 8px "DejaVu Sans", sans-serif; fill: #111; }
.px.thin { font-weight: 400; }
.px.it { font-style: italic; font-size: 9px; }
.px.big { font-size: 11px; }
.px.mono { font: 9px "DejaVu Sans Mono", monospace; }
.tiny { font: bold 6px "DejaVu Sans", sans-serif; fill: #111; }
.blue { fill: #1515f5; }
.purple { fill: #850085; }
.pink { fill: #f0f; }
.green, .px.green { fill: #0a850a; }
.px.white { fill: #fff; }
.px.orange { fill: #ff8a33; font-size: 7px; }
.iter { font: bold 13px "Open Sans", sans-serif; fill: #0000e8; }

.const { display: block; width: 100%; height: 100%; padding: 0; background: #fff; outline: 0; line-height: 16px; }
.num { border: 2px solid #1515f5; text-align: center; }
.str { border: 2px solid #f0f; border-left-width: 4px; padding-left: 2px; }
.stop { width: 100%; height: 100%; border: 2px solid; border-color: #ddd #777 #777 #ddd; background: #d4d4d4; color: #d01020; font: bold 8px/10px "DejaVu Sans", sans-serif; }
.case { display: flex; width: 100%; height: 100%; border: 1px solid #222; background: #fff; }
.case button { width: 9px; border: 0; background: none; }
.case select { flex: 1; min-width: 0; padding: 0 4px; border: 1px solid #222; border-width: 0 1px; border-radius: 0; background: none; appearance: none; }
```
